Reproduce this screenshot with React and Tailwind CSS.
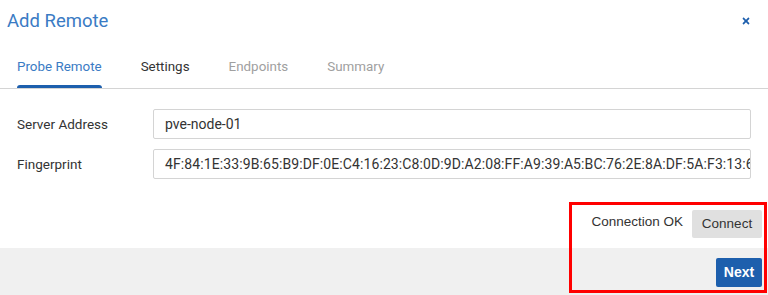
import React from 'react'
import { FaTimes } from 'react-icons/fa'

const TABS = [
  { label: 'Probe Remote', state: 'active' },
  { label: 'Settings', state: 'normal' },
  { label: 'Endpoints', state: 'disabled' },
  { label: 'Summary', state: 'disabled' },
]

const FIELDS = [
  { label: 'Server Address', value: 'pve-node-01', wide: false },
  {
    label: 'Fingerprint',
    value:
      '4F:84:1E:33:9B:65:B9:DF:0E:C4:16:23:C8:0D:9D:A2:08:FF:A9:39:A5:BC:76:2E:8A:DF:5A:F3:13:6B:7C:21',
    wide: true,
  },
]

export default function App() {
  return (
    <div className="relative flex h-[295px] w-[768px] flex-col overflow-hidden bg-white font-['Roboto',sans-serif] text-[#333]">
      {/* Title bar */}
      <div className="flex h-[42px] items-center justify-between pl-[7px] pr-[17px]">
        <h1 className="text-[18.5px] leading-none text-[#3a7bc4]">Add Remote</h1>
        <button type="button" className="text-[#1d5fad]" aria-label="Close">
          <FaTimes size={10} />
        </button>
      </div>

      {/* Tabs */}
      <div className="flex h-[47px] items-end gap-[39px] border-b border-[#d4d4d4] pl-[17px]">
        {TABS.map((t) => (
          <div
            key={t.label}
            className={`flex h-full flex-col justify-between pt-[17px] text-[13.4px] leading-[16px] ${
              t.state === 'active'
                ? 'text-[#3a7bc4]'
                : t.state === 'normal'
                  ? 'text-[#333]'
                  : 'text-[#a0a0a0]'
            }`}
          >
            <span>{t.label}</span>
            <span
              className={`h-[3px] w-full rounded-t-sm ${t.state === 'active' ? 'bg-[#1d5fad]' : 'bg-transparent'}`}
            />
          </div>
        ))}
      </div>

      {/* Form */}
      <div className="flex flex-col gap-[10px] pl-[17px] pr-[17px] pt-[20px]">
        {FIELDS.map((f) => (
          <div key={f.label} className="flex items-center">
            <label className="w-[136px] shrink-0 text-[13.5px]">{f.label}</label>
            <div
              className={`h-[30px] min-w-0 flex-1 overflow-hidden whitespace-nowrap rounded-[2px] border border-[#d4d4d4] pl-[11px] text-[14px] leading-[28px] ${
                f.wide ? 'tracking-[0.1px]' : ''
              }`}
            >
              {f.value}
            </div>
          </div>
        ))}
      </div>

      {/* Connection row */}
      <div className="flex flex-1 items-end justify-end gap-[9px] pb-[10px] pr-[6px] font-['Liberation_Sans',sans-serif] text-[13.5px]">
        <span className="mb-[6px]">Connection OK</span>
        <button
          type="button"
          className="h-[28px] w-[70px] rounded-[2px] bg-[#e0e0e0] text-[#333]"
        >
          Connect
        </button>
      </div>

      {/* Footer */}
      <div className="flex h-[47px] items-start justify-end bg-[#f0f0f0] pr-[6px] pt-[10px]">
        <button
          type="button"
          className="h-[29px] w-[46px] rounded-[2px] bg-[#1d5fad] font-['Liberation_Sans',sans-serif] text-[14px] font-bold text-white"
        >
          Next
        </button>
      </div>

      {/* Annotation box */}
      <div className="pointer-events-none absolute left-[569px] top-[202px] h-[91px] w-[198px] border-[3px] border-[#ff0000]" />
    </div>
  )
}
